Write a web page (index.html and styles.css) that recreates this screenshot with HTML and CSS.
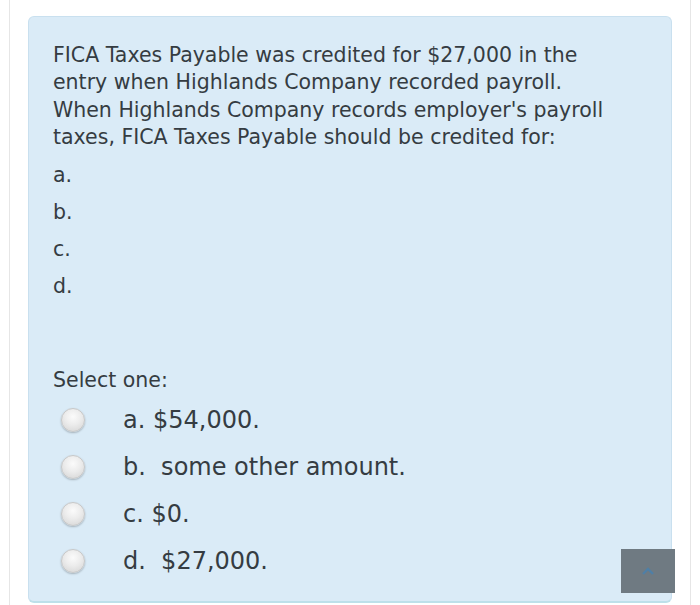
FILE: index.html
```html
<!DOCTYPE html>
<html>
<head>
<meta charset="utf-8">
<link rel="stylesheet" href="styles.css">
</head>
<body>
<div class="frame">
  <div class="card">
    <p class="question">FICA Taxes Payable was credited for $27,000 in the entry when Highlands Company recorded payroll. When Highlands Company records employer's payroll taxes, FICA Taxes Payable should be credited for:</p>
    <ol class="letters">
      <li>a.</li>
      <li>b.</li>
      <li>c.</li>
      <li>d.</li>
    </ol>
    <div class="prompt">Select one:</div>
    <div class="answers">
      <label class="answer"><span class="radio"></span><span class="text">a. $54,000.</span></label>
      <label class="answer"><span class="radio"></span><span class="text">b.  some other amount.</span></label>
      <label class="answer"><span class="radio"></span><span class="text">c. $0.</span></label>
      <label class="answer"><span class="radio"></span><span class="text">d.  $27,000.</span></label>
    </div>
  </div>
  <button class="to-top" aria-label="Back to top">
    <svg width="12" height="8" viewBox="0 0 12 8"><path d="M1 7 L6 2 L11 7" fill="none" stroke="#4f7fa6" stroke-width="2.4"/></svg>
  </button>
</div>
</body>
</html>
```
FILE: styles.css
```css
html, body {
  margin: 0;
  padding: 0;
  background: #ffffff;
}
body {
  font-family: "DejaVu Sans", Verdana, sans-serif;
  color: #353c42;
}
.frame {
  position: relative;
  margin-left: 9px;
  width: 682px;
  height: 605px;
  border-left: 1px solid #e6e6e6;
  border-right: 1px solid #e6e6e6;
  padding-top: 16px;
  box-sizing: border-box;
}
.card {
  margin-left: 18px;
  width: 644px;
  height: 587px;
  box-sizing: border-box;
  background: #daebf7;
  border: 1px solid #c9e0ef;
  border-bottom: 2px solid #bde0ea;
  border-radius: 6px;
  padding: 25px 24px 0 24px;
}
.question {
  margin: 0;
  font-size: 20.5px;
  line-height: 27.3px;
  width: 560px;
}
.letters {
  list-style: none;
  margin: 11px 0 0 0;
  padding: 0;
  font-size: 20.5px;
  line-height: 27px;
}
.letters li {
  height: 37px;
}
.prompt {
  margin-top: 57px;
  font-size: 20.5px;
  line-height: 27px;
}
.answers {
  margin-top: 2px;
}
.answer {
  display: flex;
  align-items: center;
  height: 47px;
  font-size: 24px;
}
.radio {
  width: 24px;
  height: 24px;
  border-radius: 50%;
  margin-left: 8px;
  margin-right: 38px;
  background: radial-gradient(circle at 50% 35%, #fbfbfb 0%, #ececec 45%, #d3d3d3 100%);
  box-shadow: 0 1px 2px rgba(0,0,0,0.25);
  border: 1px solid #c8c8c8;
  box-sizing: border-box;
  flex: none;
}
.text {
  white-space: pre;
}
.to-top {
  position: absolute;
  left: 611px;
  top: 549px;
  width: 54px;
  height: 44px;
  background: #6f7a82;
  border: none;
  padding: 0;
  display: flex;
  align-items: center;
  justify-content: center;
}
```
